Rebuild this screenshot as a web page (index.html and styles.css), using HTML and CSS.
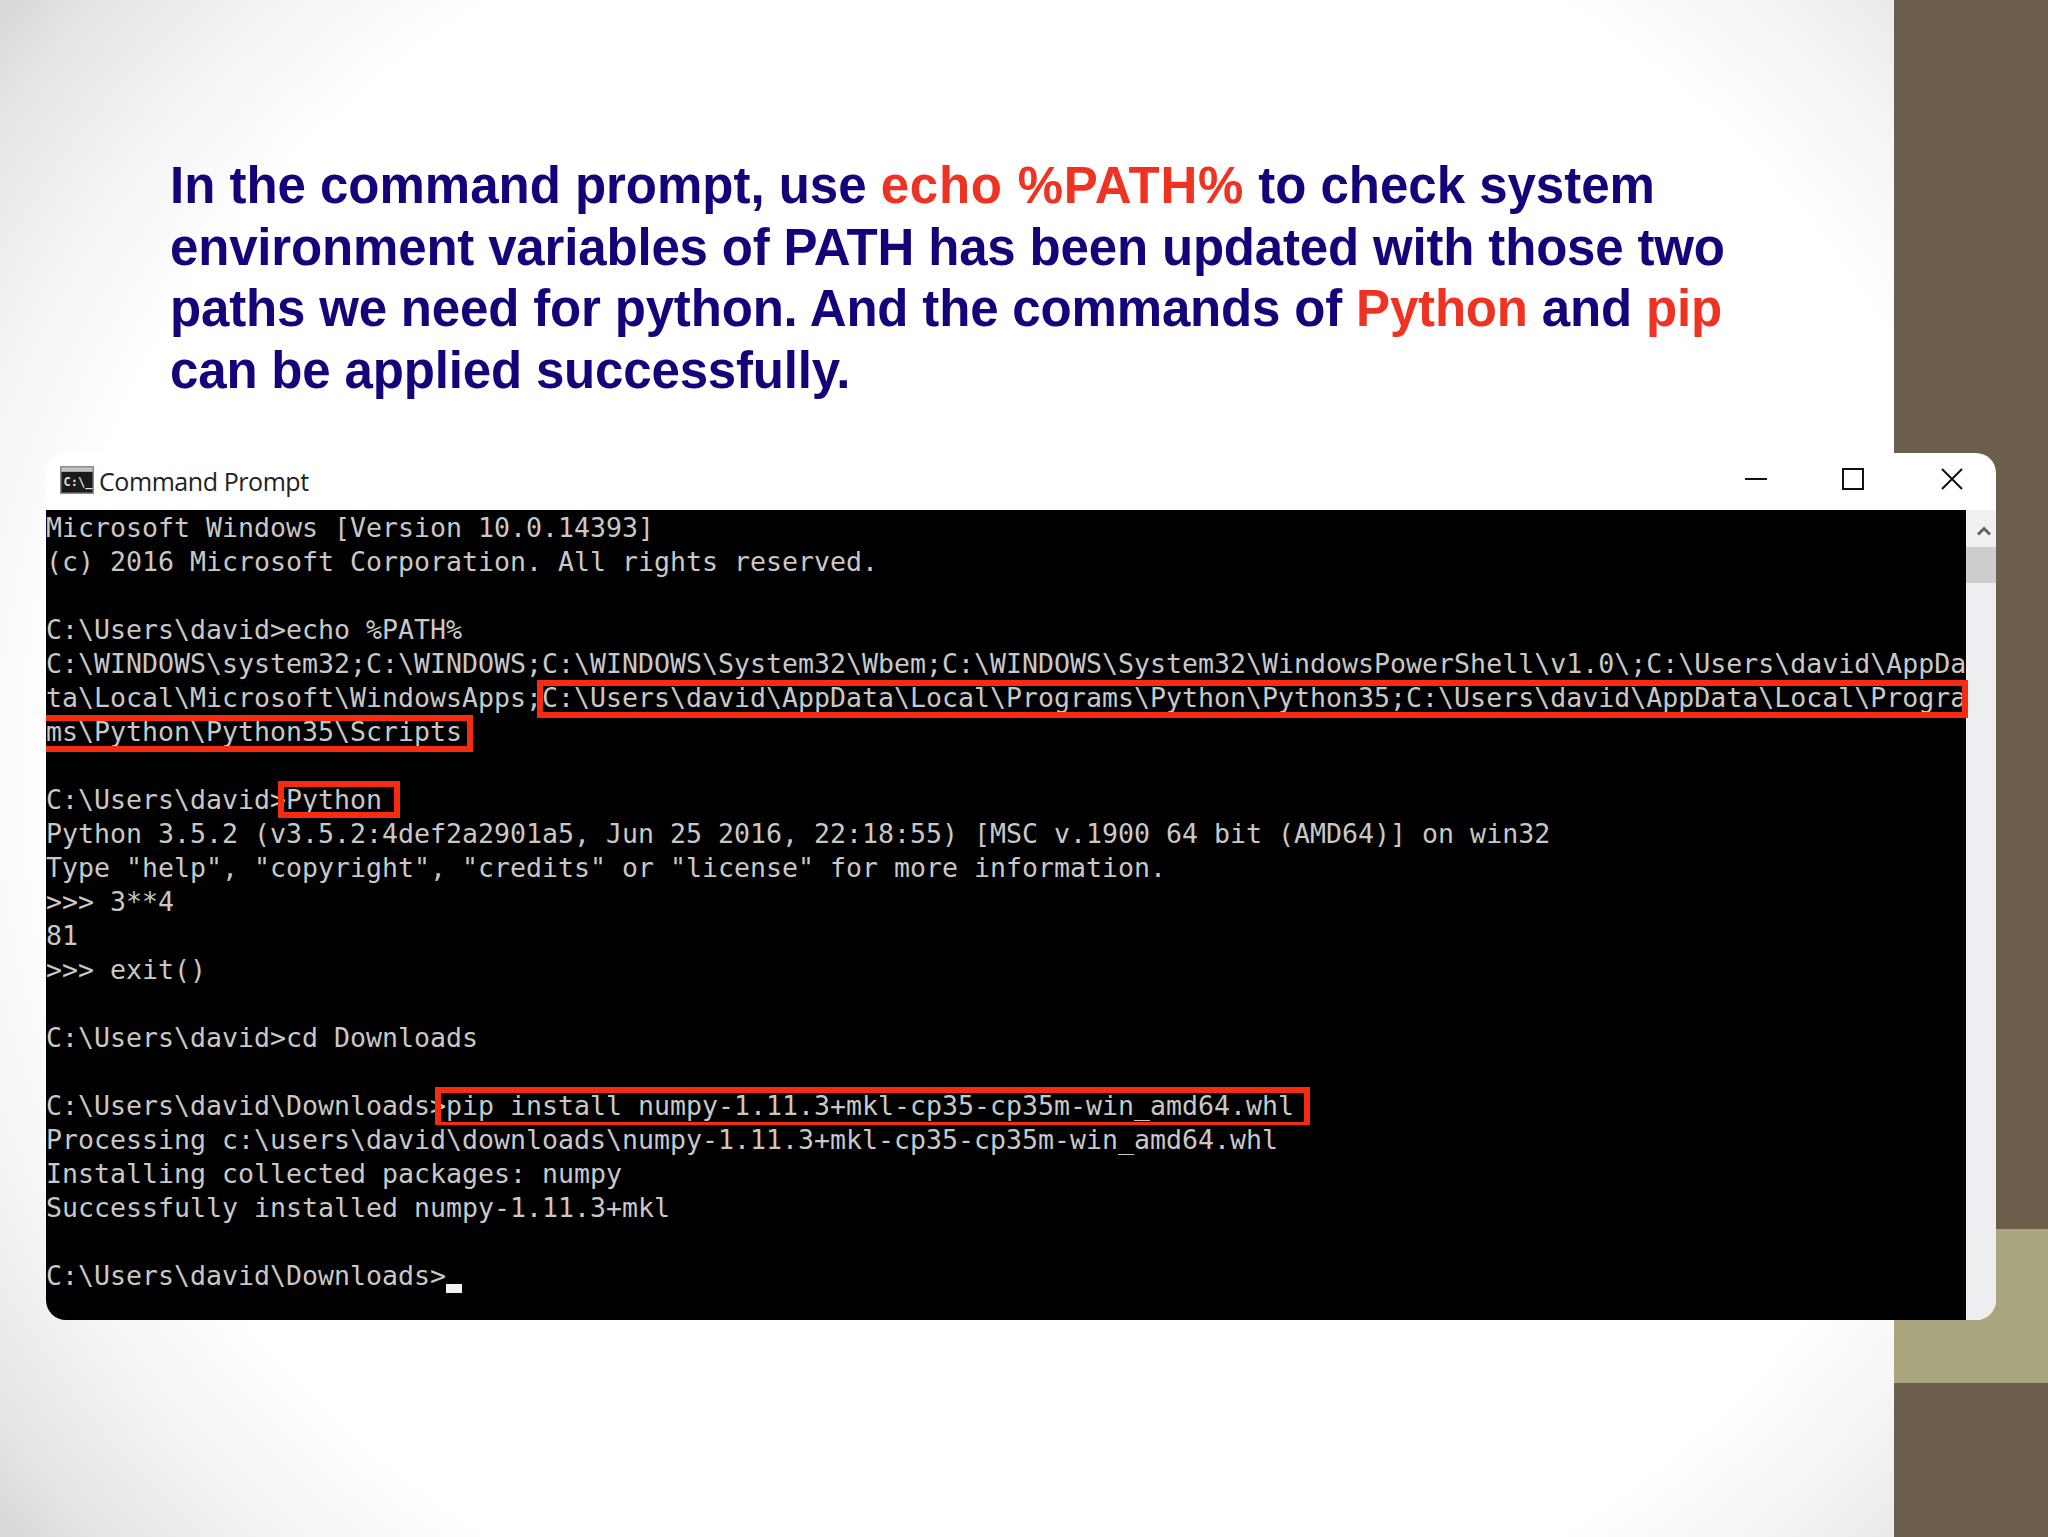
FILE: index.html
```html
<!DOCTYPE html>
<html lang="en">
<head>
<meta charset="utf-8">
<title>Command Prompt slide</title>
<link rel="stylesheet" href="styles.css">
</head>
<body>
<main class="slide">
  <div class="content">
    <p class="lead">
      <span class="line line-first">In the command prompt, use <em class="wide">echo %PATH%</em> to check system</span>
      <span class="line">environment variables of PATH has been updated with those two</span>
      <span class="line">paths we need for python. And the commands of <em>Python</em> and <em>pip</em></span>
      <span class="line">can be applied successfully.</span>
    </p>
    <section class="window">
      <header class="titlebar">
        <svg class="app-icon" viewBox="0 0 34 28" width="34" height="28" aria-hidden="true">
          <rect width="34" height="28" fill="#8a8a8a"/>
          <rect x="1.5" y="1.5" width="31" height="4" fill="#c4c4c4"/>
          <rect x="1.5" y="6" width="31" height="20.5" fill="#1a1a1a"/>
          <text x="3.5" y="20" class="app-icon-text">C:\_</text>
        </svg>
        <span class="title">Command Prompt</span>
        <div class="controls">
          <svg class="ctl-min" viewBox="0 0 22 22" width="22" height="22" aria-hidden="true"><path d="M0 11H22" stroke="#111" stroke-width="2"/></svg>
          <svg class="ctl-max" viewBox="0 0 22 22" width="22" height="22" aria-hidden="true"><rect x="1" y="1" width="20" height="20" fill="none" stroke="#111" stroke-width="2"/></svg>
          <svg class="ctl-close" viewBox="0 0 22 22" width="22" height="22" aria-hidden="true"><path d="M1 1L21 21M21 1L1 21" stroke="#111" stroke-width="2"/></svg>
        </div>
      </header>
      <div class="body">
        <pre class="terminal">Microsoft Windows [Version 10.0.14393]
(c) 2016 Microsoft Corporation. All rights reserved.

C:\Users\david&gt;echo %PATH%
C:\WINDOWS\system32;C:\WINDOWS;C:\WINDOWS\System32\Wbem;C:\WINDOWS\System32\WindowsPowerShell\v1.0\;C:\Users\david\AppDa
ta\Local\Microsoft\WindowsApps;C:\Users\david\AppData\Local\Programs\Python\Python35;C:\Users\david\AppData\Local\Progra
ms\Python\Python35\Scripts

C:\Users\david&gt;Python
Python 3.5.2 (v3.5.2:4def2a2901a5, Jun 25 2016, 22:18:55) [MSC v.1900 64 bit (AMD64)] on win32
Type "help", "copyright", "credits" or "license" for more information.
&gt;&gt;&gt; 3**4
81
&gt;&gt;&gt; exit()

C:\Users\david&gt;cd Downloads

C:\Users\david\Downloads&gt;pip install numpy-1.11.3+mkl-cp35-cp35m-win_amd64.whl
Processing c:\users\david\downloads\numpy-1.11.3+mkl-cp35-cp35m-win_amd64.whl
Installing collected packages: numpy
Successfully installed numpy-1.11.3+mkl

C:\Users\david\Downloads&gt;<span class="cursor"></span></pre>
        <div class="scrollbar">
          <div class="scroll-up"><svg viewBox="0 0 14 10" width="14" height="10" aria-hidden="true"><path d="M1 8.5L7 2.5L13 8.5" fill="none" stroke="#606060" stroke-width="2.8"/></svg></div>
          <div class="scroll-thumb"></div>
        </div>
        <div class="mark mark-a"></div>
        <div class="mark mark-b"></div>
        <div class="mark mark-c"></div>
        <div class="mark mark-d"></div>
      </div>
    </section>
  </div>
  <aside class="band"><div class="band-accent"></div></aside>
</main>
</body>
</html>
```
FILE: styles.css
```css
* { box-sizing: border-box; }
html, body { margin: 0; padding: 0; }
body { width: 2048px; height: 1537px; overflow: hidden; }
.slide {
  position: relative;
  width: 2048px;
  height: 1537px;
  display: flex;
  background: radial-gradient(ellipse 1300px 1219px at 1025px 768px, #ffffff 75%, #f5f5f6 84%, #e7e7e8 94%, #d9d9da 100%);
}
.content { width: 1894px; padding: 155px 0 0 46px; }
.lead {
  margin: 0 0 0 124px;
  height: 298px;
  font: 700 51px/61.7px "Liberation Sans", Arial, sans-serif;
  color: #14047a;
  letter-spacing: -0.17px;
}
.line { display: block; white-space: nowrap; }
.line-first { letter-spacing: -0.02px; }
.lead em { font-style: normal; color: #ee3322; font-weight: 700; }
.lead .wide { letter-spacing: 0.75px; }
.window {
  position: relative;
  z-index: 2;
  width: 1950px;
  height: 867px;
  border-radius: 20px;
  background: #fff;
  overflow: hidden;
  display: flex;
  flex-direction: column;
}
.titlebar { height: 57px; flex: none; display: flex; align-items: center; padding-left: 14px; position: relative; }
.app-icon { flex: none; margin-top: -3px; }
.app-icon-text { font: 700 12px "DejaVu Sans Mono", monospace; fill: #e0e0e0; }
.title { margin: -2px 0 0 5px; font: 400 25px/34px "Open Sans", sans-serif; letter-spacing: -0.43px; color: #222; }
.controls { position: absolute; left: 0; top: 0; width: 100%; }
.controls svg { position: absolute; top: 15px; }
.ctl-min { left: 1699px; }
.ctl-max { left: 1796px; }
.ctl-close { left: 1895px; }
.body { position: relative; flex: 1; display: flex; min-height: 0; }
.terminal {
  flex: none;
  width: 1920px;
  margin: 0;
  padding-top: 1px;
  background: #000;
  color: #c8c8c8;
  font: 400 26.58px/34px "DejaVu Sans Mono", monospace;
  overflow: hidden;
}
.cursor { display: inline-block; width: 16px; height: 9px; background: #f2f2f2; vertical-align: -8px; }
.scrollbar { flex: 1; background: #eeeef0; }
.scroll-up { height: 37px; padding: 4px 0 0 6px; display: flex; align-items: center; justify-content: center; background: #f0f0f0; }
.scroll-thumb { height: 36px; background: #cdcdcd; }
.mark { position: absolute; border: 6px solid #f52c10; }
.mark-a { left: 491px; top: 170px; width: 1431px; height: 38px; }
.mark-b { left: -4px; top: 205px; width: 431px; height: 37px; border-left: 0; }
.mark-c { left: 232px; top: 271px; width: 122px; height: 37px; }
.mark-d { left: 389px; top: 577px; width: 875px; height: 38px; border-bottom-width: 3px; }
.band { position: absolute; left: 1894px; top: 0; width: 154px; height: 1537px; background: #6b5f4b; }
.band-accent { position: absolute; left: 0; top: 1229px; width: 100%; height: 154px; background: #a9a57c; }
```
